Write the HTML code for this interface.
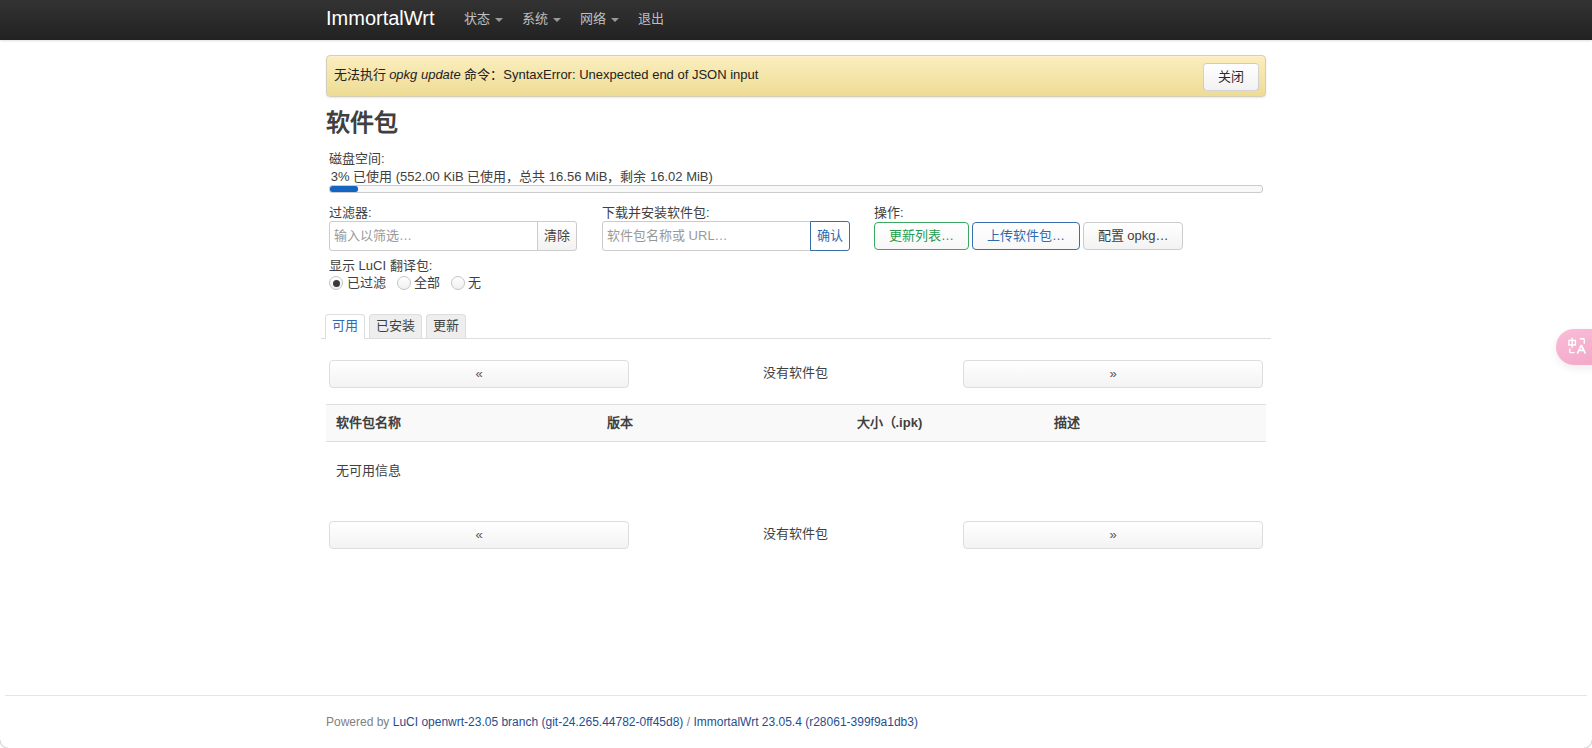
<!DOCTYPE html>
<html lang="zh-cn">
<head>
<meta charset="utf-8">
<title>软件包 - ImmortalWrt - LuCI</title>
<style>
*{box-sizing:border-box;}
html,body{margin:0;padding:0;}
body{width:1592px;height:748px;overflow:hidden;position:relative;background:#fff;
  font-family:"Liberation Sans",sans-serif;font-size:13px;line-height:18px;color:#404040;}
.abs{position:absolute;}
header{position:absolute;left:0;top:0;width:1592px;height:40px;
  background:linear-gradient(#333,#222);box-shadow:0 1px 2px rgba(0,0,0,.12);}
.brand{position:absolute;left:326px;top:0;height:40px;line-height:36px;color:#fff;font-size:20px;}
.nav{position:absolute;top:0;height:40px;line-height:38px;color:#bfbfbf;font-size:13px;white-space:nowrap;}
.caret{position:absolute;top:18px;width:0;height:0;border-left:4px solid transparent;border-right:4px solid transparent;border-top:4px solid #999;}

.alert{position:absolute;left:326px;top:55px;width:940px;height:42px;border-radius:4px;
  background:linear-gradient(#fbeebf,#eedc94);border:1px solid #d3cdb9;
  box-shadow:0 1px 2px rgba(0,0,0,.1), inset 0 1px 0 rgba(255,255,255,.25);}
.alert .msg{position:absolute;left:6.5px;top:10px;line-height:18px;color:#222;white-space:nowrap;}
.btn{position:absolute;border:1px solid #ccc;border-radius:4px;background:linear-gradient(#fff,#f2f2f2);
  color:#404040;text-align:center;white-space:nowrap;font-size:13px;}
h2{position:absolute;left:326px;top:107px;margin:0;font-size:24px;line-height:32px;font-weight:bold;color:#404040;}
.lbl{position:absolute;white-space:nowrap;line-height:18px;}
.progress{position:absolute;left:329px;top:185px;width:934px;height:8px;border:1px solid #cbcbcb;border-radius:3px;background:#f8f8f8;}
.pbar{position:absolute;left:330px;top:186px;width:28px;height:6px;background:#1565c0;border-radius:2.5px;}
.input{position:absolute;border:1px solid #ccc;background:#fff;color:#999;white-space:nowrap;}
.radio{position:absolute;width:14px;height:14px;border-radius:50%;border:1px solid #c4c4c4;background:linear-gradient(#fff,#f0f0f0);}
.tabs{position:absolute;left:321px;top:338px;width:950px;height:1px;background:#ddd;}
.tab{position:absolute;top:314px;height:25px;border:1px solid #ddd;border-bottom:none;border-radius:4px 4px 0 0;text-align:center;line-height:22px;}
.pager{position:absolute;height:28px;border:1px solid #ddd;border-radius:4px;background:linear-gradient(#fff,#f3f3f3);text-align:center;line-height:25px;color:#555;}
.thead{position:absolute;left:326px;top:404px;width:940px;height:38px;background:#f9f9f9;border-top:1px solid #ddd;border-bottom:1px solid #ddd;}
.th{position:absolute;top:9px;font-weight:bold;white-space:nowrap;}
footer{position:absolute;left:5px;top:695px;width:1582px;height:1px;background:#e5e5e5;}
.foot{position:absolute;left:326px;top:713px;font-size:12px;line-height:18px;color:#808080;white-space:nowrap;}
.foot a{color:#1f4e8f;text-decoration:none;}
</style>
</head>
<body>
<header>
  <div class="brand">ImmortalWrt</div>
  <div class="nav" style="left:464px;">状态</div><div class="caret" style="left:495px;"></div>
  <div class="nav" style="left:522px;">系统</div><div class="caret" style="left:553px;"></div>
  <div class="nav" style="left:580px;">网络</div><div class="caret" style="left:611px;"></div>
  <div class="nav" style="left:638px;">退出</div>
</header>

<div class="alert">
  <div class="msg">无法执行 <em>opkg update</em> 命令：SyntaxError: Unexpected end of JSON input</div>
  <div class="btn" style="left:876px;top:7px;width:56px;height:28px;line-height:25px;border-color:rgba(0,0,0,.16);color:#2a2a2a;">关闭</div>
</div>

<h2>软件包</h2>

<div class="lbl" style="left:329px;top:150px;">磁盘空间:</div>
<div class="lbl" style="left:330.7px;top:167.5px;">3% 已使用 (552.00 KiB 已使用，总共 16.56 MiB，剩余 16.02 MiB)</div>
<div class="progress"></div><div class="pbar"></div>

<div class="lbl" style="left:329px;top:204px;">过滤器:</div>
<div class="input" style="left:329px;top:221px;width:209px;height:30px;line-height:28px;padding-left:4px;border-radius:3px 0 0 3px;">输入以筛选…</div>
<div class="btn" style="left:537px;top:221px;width:40px;height:30px;line-height:28px;border-radius:0 3px 3px 0;background:linear-gradient(#fff,#f2f2f2);">清除</div>

<div class="lbl" style="left:602px;top:204px;">下载并安装软件包:</div>
<div class="input" style="left:602px;top:221px;width:209px;height:30px;line-height:28px;padding-left:4px;border-radius:3px 0 0 3px;">软件包名称或 URL…</div>
<div class="btn" style="left:810px;top:221px;width:40px;height:30px;line-height:28px;border-radius:0 3px 3px 0;border-color:#3a6ea8;color:#2e6bb0;background:#fff;">确认</div>

<div class="lbl" style="left:874px;top:204px;">操作:</div>
<div class="btn" style="left:874px;top:222px;width:95px;height:28px;line-height:26px;border-color:#38a862;color:#259c4e;background:linear-gradient(#fff,#f7f7f7);">更新列表…</div>
<div class="btn" style="left:972px;top:222px;width:108px;height:28px;line-height:26px;border-color:#3a6eb0;color:#2e6bb0;background:linear-gradient(#fff,#f7f7f7);">上传软件包…</div>
<div class="btn" style="left:1083px;top:222px;width:100px;height:28px;line-height:26px;">配置 opkg…</div>

<div class="lbl" style="left:329px;top:257px;">显示 LuCI 翻译包:</div>
<div class="radio" style="left:329px;top:276px;"><div style="position:absolute;left:2.5px;top:2.5px;width:7px;height:7px;border-radius:50%;background:#3a3a3a;"></div></div>
<div class="lbl" style="left:347px;top:274px;">已过滤</div>
<div class="radio" style="left:397px;top:276px;"></div>
<div class="lbl" style="left:414px;top:274px;">全部</div>
<div class="radio" style="left:451px;top:276px;"></div>
<div class="lbl" style="left:468px;top:274px;">无</div>

<div class="tabs"></div>
<div class="tab" style="left:325px;width:40px;color:#2e6bb0;background:#fff;height:25px;">可用</div>
<div class="tab" style="left:369px;width:53px;background:#eee;border-color:#ddd;height:24px;">已安装</div>
<div class="tab" style="left:426px;width:40px;background:#eee;border-color:#ddd;height:24px;">更新</div>

<div class="pager" style="left:329px;top:360px;width:300px;">«</div>
<div class="lbl" style="left:763px;top:364px;">没有软件包</div>
<div class="pager" style="left:963px;top:360px;width:300px;">»</div>

<div class="thead">
  <div class="th" style="left:10px;">软件包名称</div>
  <div class="th" style="left:281px;">版本</div>
  <div class="th" style="left:530.5px;">大小（.ipk)</div>
  <div class="th" style="left:728px;">描述</div>
</div>

<div class="lbl" style="left:336px;top:462px;">无可用信息</div>

<div class="pager" style="left:329px;top:521px;width:300px;">«</div>
<div class="lbl" style="left:763px;top:525px;">没有软件包</div>
<div class="pager" style="left:963px;top:521px;width:300px;">»</div>

<footer></footer>
<div class="foot">Powered by <a>LuCI openwrt-23.05 branch (git-24.265.44782-0ff45d8)</a> / <a>ImmortalWrt 23.05.4 (r28061-399f9a1db3)</a></div>

<div class="abs" style="left:1556px;top:329px;width:60px;height:36px;border-radius:18px;background:linear-gradient(160deg,#f9bdd8,#f2a5c6);box-shadow:0 3px 8px rgba(0,0,0,.08);"></div>
<svg class="abs" style="left:1556px;top:329px;" width="36" height="36" viewBox="0 0 36 36" fill="none" stroke="#fff" stroke-width="1.4">
<path d="M16.2 8.8V18.7M12.9 11.4H19.4V16H12.9Z"/>
<path d="M23.7 9.8H27.4Q28.3 9.8 28.3 10.7V14.7"/>
<path d="M13.8 19.6V22.7Q13.8 23.6 14.7 23.6H18.5"/>
<path d="M21.3 24.6L25.3 16.2L29.4 24.6M22.7 21.4H27.9" stroke-linejoin="bevel" stroke-width="1.6"/>
</svg>
<svg class="abs" style="left:0;top:730px;" width="1592" height="18" viewBox="0 0 1592 18" fill="none">
<path d="M0 10A8 8 0 0 0 8 18" stroke="#d9d9d9" stroke-width="1.2"/>
<path d="M1592 10A8 8 0 0 1 1584 18" stroke="#d9d9d9" stroke-width="1.2"/>
</svg>
</body>
</html>
